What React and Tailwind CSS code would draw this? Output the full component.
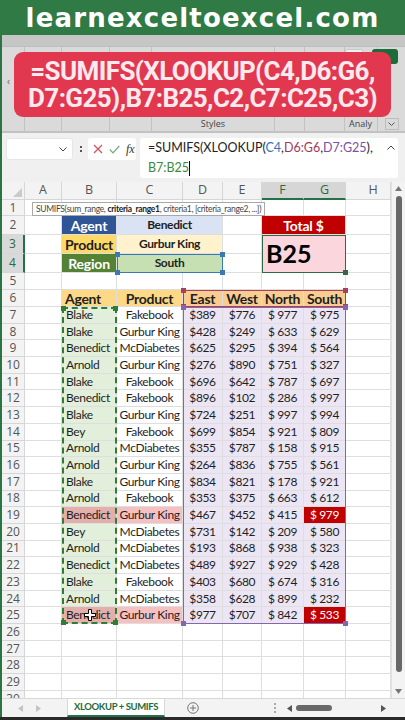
import { twMerge } from 'tailwind-merge'

const data = [
  ['Blake', 'Fakebook', '$389', '$776', '$ 977', '$ 975'],
  ['Blake', 'Gurbur King', '$428', '$249', '$ 633', '$ 629'],
  ['Benedict', 'McDiabetes', '$625', '$295', '$ 394', '$ 564'],
  ['Arnold', 'Gurbur King', '$276', '$890', '$ 751', '$ 327'],
  ['Blake', 'Fakebook', '$696', '$642', '$ 787', '$ 697'],
  ['Benedict', 'Fakebook', '$896', '$102', '$ 286', '$ 997'],
  ['Blake', 'Gurbur King', '$724', '$251', '$ 997', '$ 994'],
  ['Bey', 'Fakebook', '$699', '$854', '$ 921', '$ 809'],
  ['Arnold', 'McDiabetes', '$355', '$787', '$ 158', '$ 915'],
  ['Arnold', 'Gurbur King', '$264', '$836', '$ 755', '$ 561'],
  ['Blake', 'Gurbur King', '$834', '$821', '$ 178', '$ 921'],
  ['Arnold', 'Fakebook', '$353', '$375', '$ 663', '$ 612'],
  ['Benedict', 'Gurbur King', '$467', '$452', '$ 415', '$ 979'],
  ['Bey', 'McDiabetes', '$731', '$142', '$ 209', '$ 580'],
  ['Arnold', 'McDiabetes', '$193', '$868', '$ 938', '$ 323'],
  ['Benedict', 'McDiabetes', '$489', '$927', '$ 929', '$ 428'],
  ['Blake', 'Fakebook', '$403', '$680', '$ 674', '$ 316'],
  ['Arnold', 'McDiabetes', '$358', '$628', '$ 899', '$ 232'],
  ['Benedict', 'Gurbur King', '$977', '$707', '$ 842', '$ 533'],
]

// column widths A..H
const cols = [
  ['A', 'w-[37px]'], ['B', 'w-[55px]'], ['C', 'w-[66px]'], ['D', 'w-[40px]'],
  ['E', 'w-[39px]'], ['F', 'w-[42px]'], ['G', 'w-[42px]'], ['H', 'w-[45px]'],
]
const regionW = ['w-[40px]', 'w-[39px]', 'w-[42px]', 'w-[42px]']
const corners = ['-left-[3px] -top-[3px]', '-right-[3px] -top-[3px]', '-left-[3px] -bottom-[3px]', '-right-[3px] -bottom-[3px]']

function Cell({ className, children }) {
  return (
    <div className={twMerge('h-full shrink-0 flex items-center justify-center overflow-hidden whitespace-nowrap border-r border-b border-[#dedede] text-[12px] tracking-[-0.35px] text-[#1f1f1f]', className)}>
      {children}
    </div>
  )
}

function RowNum({ n, active }) {
  return (
    <div className={twMerge("w-[23px] h-full shrink-0 flex items-center justify-center border-r border-b border-[#d6d6d6] bg-[#f3f3f3] text-[12px] text-[#555] font-['Open_Sans',sans-serif]", active && 'bg-[#d9d9d9] text-[#2b6a40] border-r-2 border-r-[#217346]')}>
      {n}
    </div>
  )
}

function EmptyRow({ n, h }) {
  return (
    <div className={twMerge('flex shrink-0', h)}>
      <RowNum n={n} />
      {cols.map(([l, w]) => <Cell key={l} className={w} />)}
    </div>
  )
}

function RangeBox({ className, dot, only }) {
  return (
    <div className={twMerge('absolute pointer-events-none', className)}>
      {corners.filter((c, i) => !only || only.includes(i)).map(c => (
        <span key={c} className={twMerge('absolute w-[5px] h-[5px]', c, dot)} />
      ))}
    </div>
  )
}

function Ribbon() {
  const seps = ['w-[23px]', 'w-[37px]', 'w-[48px]', 'w-[42px]', 'w-[123px]', 'w-[30px]', 'w-[40px]', 'w-[33px]', 'flex-1']
  return (
    <div className="relative h-[98px] shrink-0 bg-[#d3d3d3] flex flex-col">
      <div className="h-[11px] bg-[#c6c6c6]" />
      <div className="flex-1 flex bg-[#dadada] border-t border-[#bdbdbd] font-['Open_Sans',sans-serif] text-[9px] text-[#444]">
        {seps.map((w, i) => (
          <div key={i} className={twMerge('h-full flex flex-col border-r border-[#c2c2c2]', w, i === 8 && 'border-r-0')}>
            <div className="flex-1 flex items-center">
              {i === 0 && <span className="pl-[5px] text-[10px] text-[#666]">‹</span>}
              {i === 7 && <div className="self-start mt-[2px] w-[18px] h-[11px] bg-[#f2f2f2] border border-[#c8c8c8] rounded-[2px]" />}
              {i === 8 && <div className="self-start mt-[2px] ml-[-6px] w-[26px] h-[15px] bg-[#1e6b3a] rounded-[3px]" />}
            </div>
            <div className="h-[15px] flex items-center justify-center">
              {i === 4 && <span>Styles</span>}
              {i === 7 && <span className="pl-[4px] w-full">Analy</span>}
              {i === 8 && (
                <div className="w-[14px] h-[12px] border border-[#bdbdbd] flex items-center justify-center">
                  <svg width="7" height="4" viewBox="0 0 7 4"><path d="M0.5 0.5 L3.5 3.5 L6.5 0.5" fill="none" stroke="#555" strokeWidth="1" /></svg>
                </div>
              )}
            </div>
          </div>
        ))}
      </div>
      <div className="h-[2px] bg-[#c2c2c2]" />

      {/* formula callout */}
      <div className="absolute left-[12px] top-[17px] w-[377px] h-[65px] rounded-[9px] bg-[#e2384f] flex flex-col items-center justify-center font-['Roboto',sans-serif] font-bold text-[26px] leading-[27px] tracking-[-0.6px] text-[#fdeaee]">
        <div>=SUMIFS(XLOOKUP(C4,D6:G6,</div>
        <div>D7:G25),B7:B25,C2,C7:C25,C3)</div>
      </div>
    </div>
  )
}

function FormulaBar() {
  return (
    <div className="h-[49px] shrink-0 bg-[#f0f0f0] flex items-start pt-[5px] pl-[4px]">
      <div className="w-[67px] h-[22px] bg-white rounded-[3px] border border-[#e6e6e6] flex items-center justify-end pr-[5px]">
        <svg width="8" height="5" viewBox="0 0 8 5"><path d="M0.5 0.5 L4 4 L7.5 0.5" fill="none" stroke="#444" strokeWidth="1" /></svg>
      </div>
      <div className="w-[15px] h-[22px] flex flex-col items-center justify-center gap-[2px]">
        <span className="w-[2px] h-[2px] bg-[#555]" />
        <span className="w-[2px] h-[2px] bg-[#555]" />
      </div>
      <div className="w-[48px] h-[22px] bg-white rounded-[3px] flex items-center pl-[5px] gap-[6px]">
        <svg width="10" height="10" viewBox="0 0 10 10"><path d="M1 1 L9 9 M9 1 L1 9" stroke="#d0505a" strokeWidth="1.2" /></svg>
        <svg width="11" height="9" viewBox="0 0 11 9"><path d="M0.8 4.5 L4 7.8 L10.3 1" fill="none" stroke="#7aa582" strokeWidth="1.2" /></svg>
        <span className="font-['Liberation_Serif',serif] italic text-[12px] text-[#333] leading-none">fx</span>
      </div>
      <div className="ml-[4px] w-[258px] h-[40px] bg-white rounded-[3px] relative pl-[8px] text-[12.5px] leading-[20px] text-[#222] font-['Lato',sans-serif]">
        <div>=SUMIFS(XLOOKUP(<span className="text-[#2e75b6]">C4</span>,<span className="text-[#a23a55]">D6:G6</span>,<span className="text-[#7a4fa3]">D7:G25</span>),</div>
        <div className="flex items-center"><span className="text-[#3b8a3b]">B7:B25</span><span className="w-px h-[15px] bg-black" /></div>
        <svg className="absolute right-[3px] top-[7px]" width="8" height="5" viewBox="0 0 8 5"><path d="M0.5 4.5 L4 1 L7.5 4.5" fill="none" stroke="#444" strokeWidth="1" /></svg>
      </div>
    </div>
  )
}

function VScroll() {
  return (
    <div className="w-[14px] h-full flex flex-col items-center bg-[#f3f3f3] border-l border-[#e2e2e2]">
      <svg className="mt-[4px]" width="7" height="5" viewBox="0 0 7 5"><path d="M3.5 0 L7 5 L0 5 Z" fill="#777" /></svg>
      <div className="mt-[5px] w-[6px] h-[476px] rounded-full bg-[#686868]" />
      <div className="flex-1" />
      <svg className="mb-[4px]" width="7" height="5" viewBox="0 0 7 5"><path d="M0 0 L7 0 L3.5 5 Z" fill="#777" /></svg>
    </div>
  )
}

function Sheet() {
  return (
    <div className="h-[516px] shrink-0 flex font-['Lato',sans-serif]">
      <div className="w-[389px] flex flex-col">
        {/* column letters */}
        <div className="h-[18px] flex shrink-0">
          <div className="w-[23px] h-full flex items-end justify-end p-[2px] bg-[#f3f3f3] border-r border-b border-[#d6d6d6]">
            <svg width="9" height="9" viewBox="0 0 9 9"><path d="M9 0 L9 9 L0 9 Z" fill="#cacaca" /></svg>
          </div>
          {cols.map(([l, w]) => (
            <div
              key={l}
              className={twMerge(
                "h-full shrink-0 flex items-center justify-center bg-[#f3f3f3] border-r border-b border-[#d6d6d6] text-[12.5px] text-[#555] font-['Open_Sans',sans-serif]",
                w,
                (l === 'F' || l === 'G') && 'bg-[#d6d6d6] text-[#2b6a40] border-b-2 border-b-[#217346]',
                l === 'H' && 'pl-[10px]'
              )}
            >
              {l}
            </div>
          ))}
        </div>

        <div className="relative flex-1 overflow-hidden">
          <EmptyRow n={1} h="h-[16px]" />

          <div className="flex h-[19px]">
            <RowNum n={2} />
            <Cell className="w-[37px]" />
            <Cell className="w-[55px] bg-[#2f5597] text-white font-bold text-[14px] tracking-[-0.2px]">Agent</Cell>
            <Cell className="w-[106px] bg-[#dae3f3] font-bold">Benedict</Cell>
            <Cell className="w-[39px]" />
            <Cell className="w-[84px] bg-[#c00000] text-white font-bold text-[14px] tracking-[-0.2px]">Total $</Cell>
            <Cell className="w-[45px]" />
          </div>

          <div className="flex h-[38px]">
            <div className="flex flex-col">
              <div className="flex h-[19px]">
                <RowNum n={3} active />
                <Cell className="w-[37px]" />
                <Cell className="w-[55px] bg-[#ffd966] font-bold text-[14px] tracking-[-0.2px]">Product</Cell>
                <Cell className="w-[106px] bg-[#fff2cc] font-bold">Gurbur King</Cell>
                <Cell className="w-[39px]" />
              </div>
              <div className="flex h-[19px]">
                <RowNum n={4} active />
                <Cell className="w-[37px]" />
                <Cell className="w-[55px] bg-[#548235] text-white font-bold text-[14px] tracking-[-0.2px]">Region</Cell>
                <Cell className="w-[106px] bg-[#c6e0b4] font-bold">South</Cell>
                <Cell className="w-[39px]" />
              </div>
            </div>
            <Cell className="w-[84px] bg-[#fbd6dc] justify-start pl-[4px] text-[25px] tracking-normal font-bold text-black">B25</Cell>
            <div className="flex flex-col">
              <Cell className="w-[45px] h-[19px]" />
              <Cell className="w-[45px] h-[19px]" />
            </div>
          </div>

          <EmptyRow n={5} h="h-[17px]" />

          <div className="flex h-[17px]">
            <RowNum n={6} />
            <Cell className="w-[37px]" />
            <Cell className="w-[55px] bg-[#fdd886] justify-start pl-[3px] font-bold text-[14px] tracking-[-0.3px]">Agent</Cell>
            <Cell className="w-[66px] bg-[#fdd886] font-bold text-[14px] tracking-[-0.3px]">Product</Cell>
            {['East', 'West', 'North', 'South'].map((t, i) => (
              <Cell key={t} className={twMerge('bg-[#f9cd90] font-bold text-[14px] tracking-[-0.3px]', regionW[i])}>{t}</Cell>
            ))}
            <Cell className="w-[45px]" />
          </div>

          {data.map((r, i) => {
            const hit = r[0] === 'Benedict' && r[1] === 'Gurbur King'
            return (
              <div key={i} className="flex h-[16.7px]">
                <RowNum n={i + 7} />
                <Cell className="w-[37px]" />
                <Cell className={twMerge('w-[55px] justify-start pl-[4px] bg-[#e2efda]', hit && 'bg-[#e4afab]')}>{r[0]}</Cell>
                <Cell className={twMerge('w-[66px]', hit && 'bg-[#f6c0c0]')}>{r[1]}</Cell>
                <Cell className="w-[40px] bg-[#ece6f4]">{r[2]}</Cell>
                <Cell className="w-[39px] bg-[#ece6f4]">{r[3]}</Cell>
                <Cell className="w-[42px] bg-[#ece6f4]">{r[4]}</Cell>
                <Cell className={twMerge('w-[42px] bg-[#ece6f4]', hit && 'bg-[#c00000] text-white')}>{r[5]}</Cell>
                <Cell className="w-[45px]" />
              </div>
            )
          })}

          {[26, 27, 28, 29, 30].map(n => <EmptyRow key={n} n={n} h="h-[16.7px]" />)}

          {/* range highlights */}
          <RangeBox className="left-[115px] top-[54px] w-[106px] h-[19px] border-[1.5px] border-[#3b79b6]" dot="bg-[#3b79b6]" />
          <RangeBox className="left-[260px] top-[35px] w-[84px] h-[38px] border-[1.5px] border-[#2f6a42]" dot="bg-[#2f6a42]" only={[3]} />
          <RangeBox className="left-[181px] top-[90px] w-[163px] h-[17px] border-[1.5px] border-[#a8405a]" dot="bg-[#a8405a]" />
          <RangeBox className="left-[181px] top-[107px] w-[163px] h-[317px] border-[1.5px] border-[#8566ad]" dot="bg-[#8566ad]" />
          <RangeBox className="left-[60px] top-[107px] w-[55px] h-[317px] border-2 border-dashed border-[#2e7d32]" dot="bg-[#2e7d32]" />

          {/* function tooltip */}
          <div className="absolute left-[30px] top-[2px] h-[14px] px-[3px] flex items-center bg-white border border-[#a8a8a8] whitespace-nowrap text-[8.5px] tracking-[-0.3px] text-[#444] font-['Lato',sans-serif]">
            SUMIFS(sum_range,&nbsp;<b className="text-[#222]">criteria_range1</b>, criteria1, [criteria_range2, ...])
          </div>

          {/* mouse cursor */}
          <svg className="absolute left-[82px] top-[409px]" width="12" height="12" viewBox="0 0 12 12">
            <path d="M4.5 0.5 H7.5 V4.5 H11.5 V7.5 H7.5 V11.5 H4.5 V7.5 H0.5 V4.5 H4.5 Z" fill="white" stroke="black" strokeWidth="1" />
          </svg>
        </div>
      </div>
      <VScroll />
    </div>
  )
}

function Tabs() {
  return (
    <div className="h-[19px] shrink-0 flex items-center bg-[#f3f3f3] border-t border-[#d8d8d8]">
      <svg className="ml-[16px]" width="5" height="7" viewBox="0 0 5 7"><path d="M5 0 L5 7 L0 3.5 Z" fill="#c4c4c4" /></svg>
      <svg className="ml-[13px]" width="5" height="7" viewBox="0 0 5 7"><path d="M0 0 L0 7 L5 3.5 Z" fill="#c4c4c4" /></svg>
      <div className="ml-[26px] w-[98px] h-full shrink-0 bg-white border-b-2 border-[#217346] border-x border-x-[#d8d8d8] flex items-center justify-center whitespace-nowrap text-[9.5px] tracking-[-0.4px] font-bold text-[#1d6b3b] font-['Lato',sans-serif]">
        XLOOKUP + SUMIFS
      </div>
      <svg className="ml-[22px]" width="12" height="12" viewBox="0 0 12 12">
        <circle cx="6" cy="6" r="5.3" fill="none" stroke="#777" strokeWidth="1" />
        <path d="M6 3 V9 M3 6 H9" stroke="#777" strokeWidth="1" />
      </svg>
      <div className="ml-[75px] flex flex-col gap-[2px]">
        <span className="w-[2px] h-[2px] bg-[#aaa]" />
        <span className="w-[2px] h-[2px] bg-[#aaa]" />
        <span className="w-[2px] h-[2px] bg-[#aaa]" />
      </div>
      <svg className="ml-[11px]" width="5" height="7" viewBox="0 0 5 7"><path d="M5 0 L5 7 L0 3.5 Z" fill="#555" /></svg>
      <div className="ml-[4px] w-[36px] h-[6px] rounded-full bg-[#6a6a6a]" />
      <svg className="ml-[49px]" width="5" height="7" viewBox="0 0 5 7"><path d="M0 0 L0 7 L5 3.5 Z" fill="#555" /></svg>
    </div>
  )
}

export default function App() {
  return (
    <div className="w-[405px] h-[720px] overflow-hidden flex flex-col bg-white font-['Lato',sans-serif]">
      <div className="h-[35px] shrink-0 bg-[#2f7a45] flex items-center justify-center">
        <span className="text-white text-[26px] font-bold tracking-[1.2px] leading-none font-['DejaVu_Sans',sans-serif]">learnexceltoexcel.com</span>
      </div>
      <div className="flex-1 flex flex-col border-l-2 border-[#2b7444] min-h-0">
        <Ribbon />
        <FormulaBar />
        <Sheet />
        <Tabs />
      </div>
      <div className="h-[3px] shrink-0 bg-[#2a2a2a]" />
    </div>
  )
}
